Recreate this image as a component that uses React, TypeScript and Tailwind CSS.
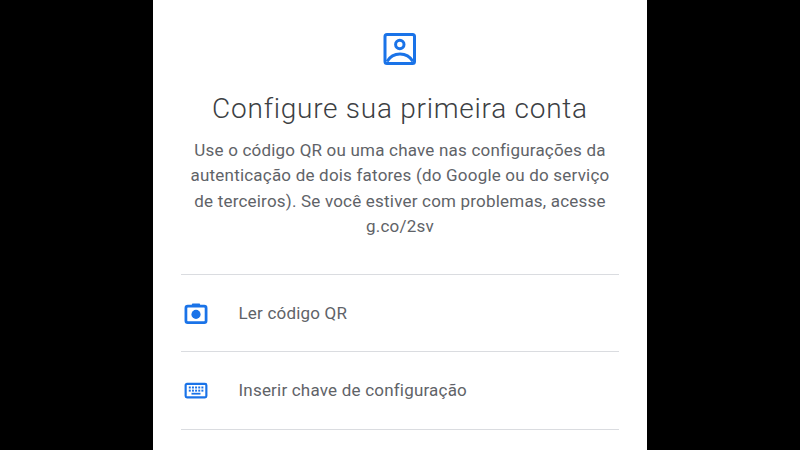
import React from 'react'

function AccountIcon() {
  return (
    <svg width="36" height="36" viewBox="0 0 36 36" fill="none" stroke="#1a73e8" strokeWidth="3">
      <rect x="3" y="3.5" width="29.5" height="29" rx="2" />
      <circle cx="17.8" cy="13.5" r="4.2" />
      <path d="M5 30.5c3-5 8-7.5 13-7.5s10 2.5 13 7.5" />
    </svg>
  )
}

function CameraIcon() {
  return (
    <svg width="24" height="22" viewBox="0 0 26 24" fill="none">
      <path d="M8 4l1-2.5h8L18 4" fill="#1a73e8" />
      <rect x="2" y="4.5" width="22" height="18" rx="2" stroke="#1a73e8" strokeWidth="3" />
      <circle cx="13" cy="13.5" r="5" fill="#1a73e8" />
    </svg>
  )
}

function KeyboardIcon() {
  const keys = [5, 8.5, 12, 15.5, 19]
  return (
    <svg width="24" height="18" viewBox="0 0 26 20" fill="none">
      <rect x="1.5" y="2" width="23" height="15" rx="1.5" stroke="#1a73e8" strokeWidth="2.4" />
      {keys.map((x) => (
        <rect key={`a${x}`} x={x} y="5" width="2.2" height="2.2" fill="#1a73e8" />
      ))}
      {keys.map((x) => (
        <rect key={`b${x}`} x={x} y="8.5" width="2.2" height="2.2" fill="#1a73e8" />
      ))}
      <rect x="8" y="12" width="10" height="2" fill="#1a73e8" />
    </svg>
  )
}

const rows = [
  { label: 'Ler código QR', icon: <CameraIcon />, h: 'h-[77px]' },
  { label: 'Inserir chave de configuração', icon: <KeyboardIcon />, h: 'h-[78px]' },
]

export default function App() {
  return (
    <div className="flex h-[450px] w-[800px] justify-center overflow-hidden bg-black font-['Roboto',sans-serif]">
      <main className="flex w-[494px] flex-col items-center bg-white px-[28px] pt-[31px]">
        <AccountIcon />
        <h1 className="mt-[24px] whitespace-nowrap text-[28px] leading-[36px] font-light tracking-[0.75px] text-[#3c4043]">
          Configure sua primeira conta
        </h1>
        <p className="mt-[11px] w-[428px] text-center text-[17px] leading-[25.3px] tracking-[0.2px] text-[#5f6368]">
          Use o código QR ou uma chave nas configurações da autenticação de dois fatores (do Google ou do serviço de terceiros). Se você estiver com problemas, acesse g.co/2sv
        </p>
        <ul className="mt-[35px] w-full border-t border-[#dadce0]">
          {rows.map((row) => (
            <li key={row.label} className={`flex items-center border-b border-[#dadce0] ${row.h}`}>
              <span className="flex w-[57.5px] shrink-0 pl-[2.5px]">{row.icon}</span>
              <span className="pt-[1px] text-[17px] tracking-[0.2px] text-[#5f6368]">{row.label}</span>
            </li>
          ))}
        </ul>
      </main>
    </div>
  )
}
